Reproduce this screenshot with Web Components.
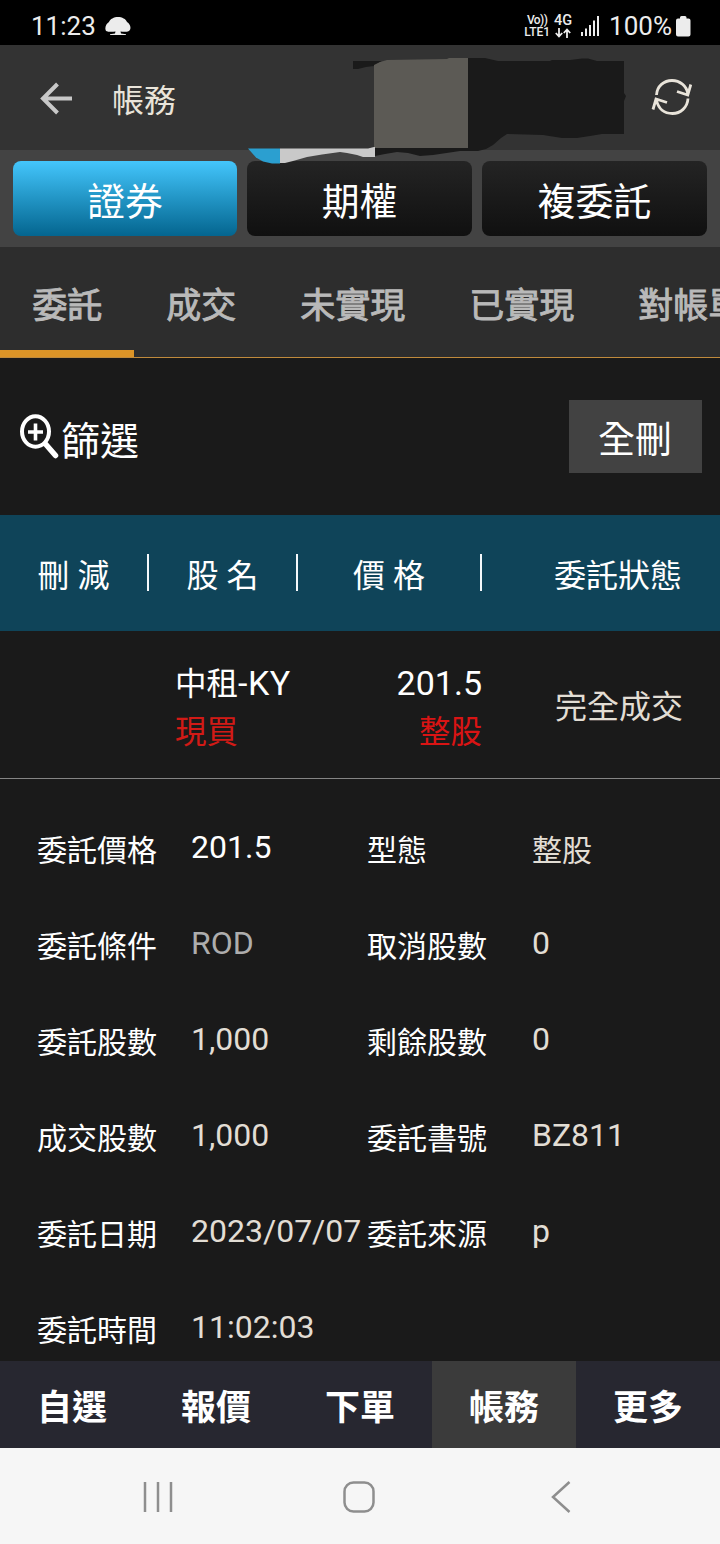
<!DOCTYPE html>
<html lang="zh-Hant">
<head>
<meta charset="UTF-8">
<title>帳務</title>
<style>
  body {
    margin: 0;
    background: #1a1a1a;
    --cjk: "Noto Sans CJK TC", Roboto, sans-serif;
    --latin: Roboto, "Noto Sans CJK TC", sans-serif;
    font-family: var(--cjk);
    color: #fff;
  }
</style>
</head>
<body>
<account-app></account-app>

<script>
// Shared base: each element only supplies its own markup
class BaseElement extends HTMLElement {
  connectedCallback() {
    if (this.shadowRoot) return;
    this.attachShadow({ mode: 'open' });
    this.shadowRoot.innerHTML = this.template();
  }
}

class StatusBar extends BaseElement {
  template() {
    return `
      <style>
        :host {
          display: flex;
          align-items: center;
          height: 45px;
          box-sizing: border-box;
          padding: 7px 29px 0 31px;
          background: #000;
          color: #ececec;
          font: 26px/38px var(--latin);
        }
        svg { display: block; flex: none; }
        .tree { margin-left: 9px; }
        .net {
          display: flex;
          flex-direction: column;
          align-items: center;
          line-height: 12px;
          font-weight: 500;
        }
        .volte { margin-left: auto; width: 26px; font-size: 12px; }
        .volte span:first-child { letter-spacing: -0.6px; }
        .volte span:last-child { line-height: 13px; }
        .data { margin-left: 4px; width: 18px; font-size: 14.5px; }
        .data svg { margin-top: 1px; }
        .bars { margin: 0 10px 0 9px; }
        .battery { margin-left: 4px; }
      </style>
      <span>11:23</span>
      <svg class="tree" width="26" height="19" viewBox="0 0 26 19" fill="#ececec">
        <path d="M1 14C-1 10 2 6 4 5C5 2 9 0 13 0C17 0 21 2 22 5C25 7 27 11 24 14C22 15 19 15 15.500 14.500L16 16.500L21 17.300V18H5V17.300L10 16.500L10.500 14.500C7 15 3 15 1 14Z"/>
      </svg>
      <span class="net volte"><span>Vo))</span><span>LTE1</span></span>
      <span class="net data"><span>4G</span>
        <svg width="16" height="10" viewBox="0 0 16 10" fill="none" stroke="#ececec" stroke-width="1.800">
          <path d="M4 0V8.500M0.800 5L4 8.500L7.200 5M12 10V1.500M8.800 5L12 1.500L15.200 5"/>
        </svg>
      </span>
      <svg class="bars" width="18" height="20" viewBox="0 0 18 20" fill="#ececec">
        <path d="M0 16h2v4H0zM4 12.500h2V20H4zM8 9h2v11H8zM12 4.500h2V20h-2zM16 0h2v20h-2z"/>
      </svg>
      <span>100%</span>
      <svg class="battery" width="15" height="21" viewBox="0 0 15 21" fill="#ececec">
        <path d="M4 2.500V1.500Q4 0 5.500 0H9Q10.500 0 10.500 1.500V2.500H12.500Q14.500 2.500 14.500 4.500V18.500Q14.500 20.500 12.500 20.500H2Q0 20.500 0 18.500V4.500Q0 2.500 2 2.500Z"/>
      </svg>
    `;
  }
}
customElements.define('status-bar', StatusBar);

class AppHeader extends BaseElement {
  template() {
    return `
      <style>
        :host {
          display: flex;
          align-items: center;
          height: 105px;
          box-sizing: border-box;
          padding: 0 27px 0 39px;
          background: #333;
          color: #e9e4da;
          font-size: 32px;
          line-height: 48px;
        }
        svg { display: block; }
        .title { margin-left: 39px; }
        .reload { margin: -1px 0 1px auto; }
      </style>
      <svg width="34" height="34" viewBox="0 0 34 34" fill="none" stroke="#c8c8c8" stroke-width="4">
        <path d="M33 17.500H4M18.500 3L4 17.500L18.500 32"/>
      </svg>
      <span class="title"><slot></slot></span>
      <svg class="reload" width="42" height="38" viewBox="0 0 42 38" fill="none" stroke="#e9e4da" stroke-width="2.800">
        <path d="M5.500 17C6 8 13 2.500 21 2.500C29 2.500 35.500 8 36.800 15.500M26 13.500L36.800 17L39.800 6.500"/>
        <path d="M37 20.500C36.500 29.500 29.500 35.500 21.500 35.500C13 35.500 7.500 30.500 5.500 22.500M16 24.500L5 21L2 31.500"/>
      </svg>
    `;
  }
}
customElements.define('app-header', AppHeader);

// Painted-over account name, lies over the header and the segment bar
class AccountMask extends BaseElement {
  template() {
    return `
      <style>
        :host { position: absolute; left: 240px; top: 50px; display: block; }
        svg { display: block; }
      </style>
      <svg width="400" height="120" viewBox="240 50 400 120">
        <path fill="#1a1a1a" d="M353 61H382L374 66L366 67L358 69H353Z"/>
        <path fill="#1a1a1a" d="M467 58H485L498 61H550L552 60H570L582 58.500H588L597 61H624V93L626 96L624 101V134H602L590 136L577 138H562L543 135L507 134L501 138L493 145L486 149L478 151H460L433 155L420 156L408 153L397 152L385 154L375 156V147H467Z"/>
        <path fill="#5c5a55" d="M374 65L380 62L387 60L447 59L449 58H468V148H374Z"/>
        <path fill="#c9c9c9" d="M280 148.500H368L374 147H375V157H363L357 155L347 153L340 152L322 154.500L307 157L293 161L285 163H280Z"/>
        <path fill="#2b9fd0" d="M248 148.500H280V163.500H272L263 161.500L256 157.500Z"/>
      </svg>
    `;
  }
}
customElements.define('account-mask', AccountMask);

class SegmentBar extends BaseElement {
  template() {
    const items = this.getAttribute('items').split(',');
    return `
      <style>
        :host {
          display: grid;
          grid-template-columns: 224px 225px 225px;
          gap: 10px;
          height: 97px;
          box-sizing: border-box;
          padding: 11px 13px;
          background: #434343;
        }
        .segment {
          border-radius: 8px;
          background: linear-gradient(#242424, #101010);
          font-size: 37.8px;
          line-height: 75px;
          text-align: center;
        }
        .segment.active { background: linear-gradient(#44c6fc, #2295c5 50%, #04658f); }
      </style>
      ${items.map((item, i) => `<div class="segment ${i === 0 ? 'active' : ''}">${item}</div>`).join('')}
    `;
  }
}
customElements.define('segment-bar', SegmentBar);

class TabStrip extends BaseElement {
  template() {
    const items = this.getAttribute('items').split(',');
    return `
      <style>
        :host {
          display: flex;
          height: 111px;
          box-sizing: border-box;
          overflow: hidden;
          border-bottom: 1px solid #c08a3c;
          background: #2d2d2d;
          color: #b9b9b9;
          font-size: 35px;
          -webkit-text-stroke: 0.9px #b9b9b9;
          line-height: 112px;
        }
        .tab {
          flex: none;
          box-sizing: border-box;
          height: 110px;
          padding: 0 31.7px 0 32.300px;
          white-space: nowrap;
        }
        .tab.active { border-bottom: 7px solid #dc9427; box-shadow: 0 1px #dc9427; }
      </style>
      ${items.map((item, i) => `<div class="tab ${i === 0 ? 'active' : ''}">${item}</div>`).join('')}
    `;
  }
}
customElements.define('tab-strip', TabStrip);

class FilterBar extends BaseElement {
  template() {
    return `
      <style>
        :host {
          display: flex;
          align-items: center;
          height: 157px;
          box-sizing: border-box;
          padding: 0 18px 0 19px;
        }
        .label { margin-left: 1px; padding-top: 2px; font-size: 39px; line-height: 56px; }
        .clear {
          margin-left: auto;
          width: 133px;
          height: 73px;
          background: #424242;
          font-size: 37px;
          line-height: 74px;
          text-align: center;
          text-indent: -1px;
        }
      </style>
      <svg width="41" height="46" viewBox="0 0 41 46" fill="none" stroke="#fff">
        <ellipse cx="16.500" cy="17.500" rx="13.500" ry="15.200" stroke-width="4"/>
        <path d="M26.500 30L36.500 41.500" stroke-width="5.500" stroke-linecap="round"/>
        <path d="M16.500 9.500V26.500M9 18H24" stroke-width="3.600"/>
      </svg>
      <span class="label">篩選</span>
      <div class="clear">全刪</div>
    `;
  }
}
customElements.define('filter-bar', FilterBar);

class OrderTable extends BaseElement {
  template() {
    return `
      <style>
        :host { display: block; font-size: 32px; line-height: 48px; }
        .head, .row {
          display: grid;
          grid-template-columns: 149px 149px 184px 1fr;
          align-items: center;
        }
        .head { height: 116px; box-sizing: border-box; padding-bottom: 1px; background: #0f4459; }
        .head div {
          height: 37px;
          text-align: center;
          line-height: 39px;
          word-spacing: 1px;
          border-right: 2px solid #f4f8fa;
        }
        .head div:last-child, .status { text-align: right; padding-right: 38px; border: 0; }
        .row { height: 147px; border-bottom: 1px solid #858585; }
        .name { padding-left: 26px; font-size: 31.5px; white-space: nowrap; }
        .name b, .price b { font: 34px/1 var(--latin); }
        .name b { letter-spacing: 0.5px; }
        .price { text-align: right; }
        .red { color: #d91414; font-size: 31.5px; }
        .name .red { color: #d21a16; }
        .status { padding: 0 37px 2px 0; color: #e2ddd4; }
      </style>
      <div class="head">
        <div>刪 減</div><div>股 名</div><div>價 格</div><div>委託狀態</div>
      </div>
      <div class="row">
        <span></span>
        <div class="name"><div>中租<b>-KY</b></div><div class="red">現買</div></div>
        <div class="price"><div><b>201.5</b></div><div class="red">整股</div></div>
        <div class="status">完全成交</div>
      </div>
    `;
  }
}
customElements.define('order-table', OrderTable);

class DetailField extends BaseElement {
  template() {
    return `
      <style>
        :host { display: flex; align-items: center; height: 96px; white-space: nowrap; }
        .label { width: var(--label-width, 154px); font-size: 30px; line-height: 44px; padding-top: 1px; flex: none; }
        .value { font: 32px/44px var(--latin); color: #e2ddd4; }
        :host([tone="white"]) .value { color: #fff; }
        :host([tone="gray"]) .value { color: #adadad; }
        :host([cjk]) .value { font: 30px/44px var(--cjk); padding-top: 1px; }
      </style>
      <span class="label">${this.getAttribute('label')}</span>
      <span class="value"><slot></slot></span>
    `;
  }
}
customElements.define('detail-field', DetailField);

class OrderDetail extends BaseElement {
  template() {
    return `
      <style>
        :host {
          display: grid;
          grid-template-columns: 330px 1fr;
          align-content: start;
          height: 582px;
          box-sizing: border-box;
          padding: 20px 0 0 37px;
          overflow: hidden;
        }
        detail-field:nth-of-type(even) { --label-width: 165px; }
      </style>
      <detail-field label="委託價格" tone="white">201.5</detail-field>
      <detail-field label="型態" cjk>整股</detail-field>
      <detail-field label="委託條件" tone="gray">ROD</detail-field>
      <detail-field label="取消股數">0</detail-field>
      <detail-field label="委託股數">1,000</detail-field>
      <detail-field label="剩餘股數">0</detail-field>
      <detail-field label="成交股數">1,000</detail-field>
      <detail-field label="委託書號">BZ811</detail-field>
      <detail-field label="委託日期">2023/07/07</detail-field>
      <detail-field label="委託來源">p</detail-field>
      <detail-field label="委託時間">11:02:03</detail-field>
    `;
  }
}
customElements.define('order-detail', OrderDetail);

class BottomNav extends BaseElement {
  template() {
    const items = this.getAttribute('items').split(',');
    const active = this.getAttribute('active');
    return `
      <style>
        :host { display: flex; height: 87px; background: #272730; }
        .item { flex: 1; text-align: center; font-size: 35px; font-weight: 700; line-height: 88px; }
        .item.active { background: #3b3b3b; }
      </style>
      ${items.map(item => `<div class="item ${item === active ? 'active' : ''}">${item}</div>`).join('')}
    `;
  }
}
customElements.define('bottom-nav', BottomNav);

class SystemNav extends BaseElement {
  template() {
    return `
      <style>
        :host {
          display: flex;
          align-items: center;
          height: 96px;
          box-sizing: border-box;
          padding: 2px 149px 0 143px;
          background: #f6f6f6;
        }
        svg { fill: none; stroke: #8e8e8e; stroke-width: 2.5; }
        .home { margin-left: 170px; }
        .back { margin-left: auto; }
      </style>
      <svg width="30" height="32" viewBox="0 0 30 32"><path d="M2 1V31M15 1V31M28 1V31"/></svg>
      <svg class="home" width="32" height="32" viewBox="0 0 32 32"><rect x="1.500" y="1.500" width="29" height="29" rx="9"/></svg>
      <svg class="back" width="20" height="32" viewBox="0 0 20 32"><path d="M18.500 1L2 16L18.500 31"/></svg>
    `;
  }
}
customElements.define('system-nav', SystemNav);

class AccountApp extends BaseElement {
  template() {
    return `
      <style>
        :host { display: block; position: relative; width: 720px; height: 1544px; overflow: hidden; }
      </style>
      <status-bar></status-bar>
      <app-header>帳務</app-header>
      <segment-bar items="證券,期權,複委託"></segment-bar>
      <tab-strip items="委託,成交,未實現,已實現,對帳單"></tab-strip>
      <filter-bar></filter-bar>
      <order-table></order-table>
      <order-detail></order-detail>
      <bottom-nav items="自選,報價,下單,帳務,更多" active="帳務"></bottom-nav>
      <system-nav></system-nav>
      <account-mask></account-mask>
    `;
  }
}
customElements.define('account-app', AccountApp);
</script>
</body>
</html>
